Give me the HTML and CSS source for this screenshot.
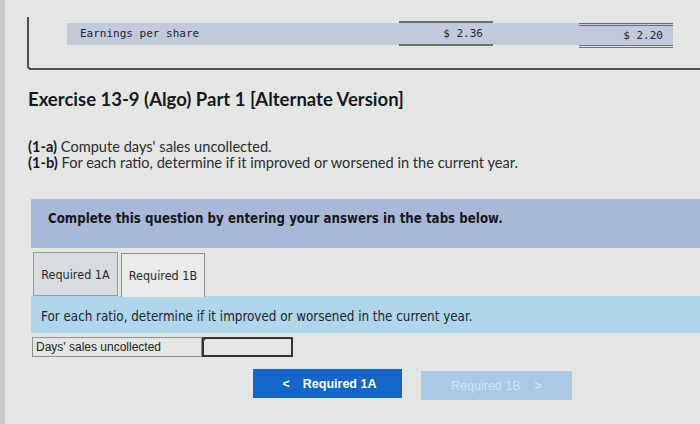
FILE: index.html
```html
<!DOCTYPE html>
<html>
<head>
<meta charset="utf-8">
<link rel="stylesheet" href="styles.css">
</head>
<body>
<div class="page">
  <div class="eps">
    <div class="eps-row">
      <div class="eps-label">Earnings per share</div>
      <div class="eps-c1">$ 2.36</div>
      <div class="eps-gap"></div>
      <div class="eps-c2">$ 2.20</div>
    </div>
  </div>

  <h1 class="title">Exercise 13-9 (Algo) Part 1 [Alternate Version]</h1>

  <div class="instr">
    <div><b>(1-a)</b> Compute days' sales uncollected.</div>
    <div><b>(1-b)</b> For each ratio, determine if it improved or worsened in the current year.</div>
  </div>

  <div class="banner">Complete this question by entering your answers in the tabs below.</div>

  <div class="tabs">
    <div class="tab">Required 1A</div>
    <div class="tab active">Required 1B</div>
  </div>
  <div class="panel">For each ratio, determine if it improved or worsened in the current year.</div>

  <div class="answer-row">
    <div class="ans-label">Days' sales uncollected</div>
    <div class="ans-input"><span class="marker"></span></div>
  </div>

  <div class="nav">
    <div class="btn prev"><span class="chev">&lt;</span>Required 1A</div>
    <div class="btn next">Required 1B<span class="chev r">&gt;</span></div>
  </div>
</div>
</body>
</html>
```

FILE: styles.css
```css
* { box-sizing: border-box; }
html, body { margin: 0; padding: 0; }
body {
  background: #e4e6e4;
  font-family: "Lato", "Liberation Sans", sans-serif;
  color: #1c1f24;
}
.page {
  border-left: 5px solid #c6c9c7;
  min-height: 424px;
  padding-top: 17px;
  overflow: hidden;
}

/* earnings per share block */
.eps {
  margin-left: 22px;
  height: 53px;
  border-left: 2px solid #4d5053;
  border-bottom: 2px solid #4d5053;
  border-bottom-left-radius: 4px;
  padding: 6px 0 0 38px;
}
.eps-row {
  display: flex;
  align-items: flex-start;
  width: 606px;
  height: 22px;
  background: #c1cadb;
  font-family: "DejaVu Sans Mono", "Liberation Mono", monospace;
  font-size: 11px;
  color: #23262b;
}
.eps-label {
  width: 332px;
  padding-left: 13px;
  line-height: 22px;
}
.eps-c1 {
  width: 94px;
  margin-top: -2px;
  height: 25px;
  border-top: 2px solid #6c6f72;
  border-bottom: 2px solid #6c6f72;
  text-align: right;
  padding-right: 10px;
  line-height: 21px;
}
.eps-gap { width: 86px; }
.eps-c2 {
  width: 94px;
  height: 25px;
  border-top: 3px double #6c6f72;
  border-bottom: 3px double #6c6f72;
  text-align: right;
  padding-right: 10px;
  line-height: 19px;
}

.title {
  margin: 18px 0 0 23px;
  font-size: 18.5px;
  line-height: 22px;
  font-weight: 700;
  color: #16191d;
}

.instr {
  margin: 29px 0 0 23px;
  font-size: 14.6px;
  line-height: 16px;
  color: #2a2d31;
}
.instr b { font-weight: 700; color: #16191d; }

.banner {
  margin: 28px 0 0 26px;
  height: 49px;
  background: #a8b9d8;
  padding: 11px 0 0 17px;
  font-family: "DejaVu Sans Condensed", "DejaVu Sans", sans-serif;
  font-weight: 700;
  font-size: 13.2px;
  line-height: 18px;
  color: #15181c;
}

.tabs {
  display: flex;
  gap: 3px;
  margin: 4px 0 0 28px;
  height: 44px;
  align-items: stretch;
}
.tab {
  width: 85px;
  border: 1px solid #999ca0;
  background: #d8dce1;
  font-family: "DejaVu Sans Condensed", "DejaVu Sans", sans-serif;
  font-size: 12.5px;
  color: #26292d;
  display: flex;
  align-items: center;
  justify-content: center;
}
.tab.active {
  width: 84px;
  background: #e9ebe9;
  border-color: #8c8f93;
  border-bottom: none;
  margin-top: 1px;
  position: relative;
  z-index: 1;
  margin-bottom: -1px;
}

.panel {
  margin-left: 26px;
  height: 37px;
  background: #afd6ea;
  padding: 4px 0 0 10px;
  display: flex;
  align-items: center;
  font-family: "DejaVu Sans Condensed", "DejaVu Sans", sans-serif;
  font-size: 13.3px;
  color: #22262a;
}

.answer-row {
  display: flex;
  margin: 4px 0 0 27px;
  height: 20px;
}
.ans-label {
  width: 170px;
  border: 1px solid #8e9195;
  font-family: "Liberation Sans", Arial, sans-serif;
  font-size: 12px;
  line-height: 18px;
  padding-left: 3px;
  color: #202327;
}
.ans-input {
  width: 91px;
  border: 2px solid #2f3236;
  position: relative;
}
.marker {
  position: absolute;
  left: -1px;
  top: -1px;
  width: 0;
  height: 0;
  border-top: 4px solid #1c4fa8;
  border-right: 4px solid transparent;
}

.nav {
  display: flex;
  gap: 19px;
  margin: 12px 0 0 248px;
}
.btn {
  height: 29px;
  display: flex;
  align-items: center;
  justify-content: center;
  font-family: "Liberation Sans", Arial, sans-serif;
  font-weight: 700;
  font-size: 12.5px;
  color: #fff;
}
.btn.prev {
  width: 149px;
  background: #1467c8;
  padding-left: 4px;
}
.btn.next {
  width: 151px;
  margin-top: 2px;
  background: #a9c9e6;
  color: #d2e3f2;
  font-weight: 400;
}
.chev { margin-right: 13px; font-weight: 700; }
.chev.r { margin: 0 0 0 14px; }
```
